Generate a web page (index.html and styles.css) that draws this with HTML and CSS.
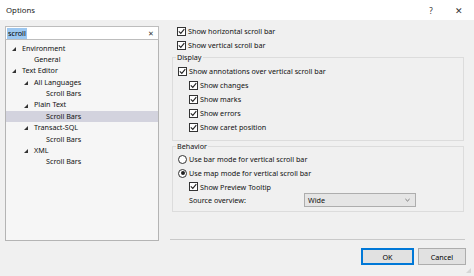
FILE: index.html
```html
<!DOCTYPE html>
<html>
<head>
<meta charset="utf-8">
<link rel="stylesheet" href="styles.css">
</head>
<body>
<div class="window">
  <div class="titlebar">
    <span class="title">Options</span>
    <span class="tb-btns"><span class="help">?</span><span class="close">✕</span></span>
  </div>
  <div class="main">
    <div class="left">
      <div class="search"><span class="sel">scroll</span><span class="clear">✕</span></div>
      <div class="tree">
        <div class="node l0"><span class="tog"><i class="tri"></i></span>Environment</div>
        <div class="node l1"><span class="tog"></span>General</div>
        <div class="node l0"><span class="tog"><i class="tri"></i></span>Text Editor</div>
        <div class="node l1"><span class="tog"><i class="tri"></i></span>All Languages</div>
        <div class="node l2"><span class="tog"></span>Scroll Bars</div>
        <div class="node l1"><span class="tog"><i class="tri"></i></span>Plain Text</div>
        <div class="node l2 selected"><span class="tog"></span>Scroll Bars</div>
        <div class="node l1"><span class="tog"><i class="tri"></i></span>Transact-SQL</div>
        <div class="node l2"><span class="tog"></span>Scroll Bars</div>
        <div class="node l1"><span class="tog"><i class="tri"></i></span>XML</div>
        <div class="node l2"><span class="tog"></span>Scroll Bars</div>
      </div>
    </div>
    <div class="right">
      <div class="row"><span class="cb"><svg viewBox="0 0 7 7"><path d="M0.8 3.4 L2.8 5.4 L6.3 1.2"/></svg></span>Show horizontal scroll bar</div>
      <div class="row"><span class="cb"><svg viewBox="0 0 7 7"><path d="M0.8 3.4 L2.8 5.4 L6.3 1.2"/></svg></span>Show vertical scroll bar</div>
      <fieldset class="group display">
        <legend>Display</legend>
        <div class="row"><span class="cb"><svg viewBox="0 0 7 7"><path d="M0.8 3.4 L2.8 5.4 L6.3 1.2"/></svg></span>Show annotations over vertical scroll bar</div>
        <div class="row sub"><span class="cb"><svg viewBox="0 0 7 7"><path d="M0.8 3.4 L2.8 5.4 L6.3 1.2"/></svg></span>Show changes</div>
        <div class="row sub"><span class="cb"><svg viewBox="0 0 7 7"><path d="M0.8 3.4 L2.8 5.4 L6.3 1.2"/></svg></span>Show marks</div>
        <div class="row sub"><span class="cb"><svg viewBox="0 0 7 7"><path d="M0.8 3.4 L2.8 5.4 L6.3 1.2"/></svg></span>Show errors</div>
        <div class="row sub"><span class="cb"><svg viewBox="0 0 7 7"><path d="M0.8 3.4 L2.8 5.4 L6.3 1.2"/></svg></span>Show caret position</div>
      </fieldset>
      <fieldset class="group behavior">
        <legend>Behavior</legend>
        <div class="row"><span class="rb"></span>Use bar mode for vertical scroll bar</div>
        <div class="row"><span class="rb on"><i></i></span>Use map mode for vertical scroll bar</div>
        <div class="row sub short"><span class="cb"><svg viewBox="0 0 7 7"><path d="M0.8 3.4 L2.8 5.4 L6.3 1.2"/></svg></span>Show Preview Tooltip</div>
        <div class="row sub"><span class="lbl">Source overview:</span><span class="combo"><span>Wide</span><svg class="chev" viewBox="0 0 6 4"><path d="M0.5 0.8 L3 3.2 L5.5 0.8"/></svg></span></div>
      </fieldset>
      <div class="spacer"></div>
      <div class="sep"></div>
    </div>
  </div>
  <div class="footer">
    <button class="btn ok">OK</button>
    <button class="btn">Cancel</button>
    <span class="grip"></span>
  </div>
</div>
</body>
</html>
```
FILE: styles.css
```css
html, body {
  margin: 0;
  padding: 0;
}
body {
  width: 474px;
  height: 276px;
  overflow: hidden;
  background: #f0f0f0;
  font-family: "Noto Sans", "Open Sans", sans-serif;
  font-size: 7.2px;
  color: #111;
}
.window {
  width: 474px;
  height: 276px;
  display: flex;
  flex-direction: column;
}
.titlebar {
  height: 20px;
  background: #fff;
  display: flex;
  align-items: center;
  justify-content: space-between;
  padding: 0 0 0 6px;
  flex: none;
}
.title {
  font-size: 7.8px;
  color: #222;
}
.tb-btns {
  display: flex;
  align-items: center;
  color: #333;
}
.help {
  font-size: 8px;
  width: 28px;
  text-align: center;
}
.close {
  font-size: 9px;
  width: 28px;
  text-align: center;
  margin-right: 1px;
}
.main {
  display: flex;
  height: 221px;
  flex: none;
}
.left {
  width: 154px;
  margin-left: 5px;
  padding-top: 6px;
  display: flex;
  flex-direction: column;
}
.search {
  height: 14px;
  box-sizing: border-box;
  background: #fff;
  border: 1px solid #bdbdbd;
  display: flex;
  align-items: center;
  justify-content: space-between;
  padding: 0 4px 0 1px;
}
.sel {
  background: #9cc7f0;
  color: #000;
  padding: 0 1px;
  line-height: 11px;
}
.clear {
  font-size: 6.5px;
  color: #333;
}
.tree {
  flex: 1;
  box-sizing: border-box;
  background: #f6f6f6;
  border: 1px solid #b4b4b4;
  border-top: none;
  padding-top: 2.5px;
}
.node {
  height: 11.4px;
  line-height: 11.4px;
  display: flex;
  align-items: center;
  white-space: nowrap;
}
.node.l0 { padding-left: 6px; }
.node.l1 { padding-left: 18px; }
.node.l2 { padding-left: 30px; }
.node.selected {
  background: #d3d3de;
}
.tog {
  width: 10px;
  height: 11px;
  display: flex;
  align-items: center;
  flex: none;
}
.tri {
  display: block;
  width: 0;
  height: 0;
  border-left: 4px solid transparent;
  border-bottom: 4px solid #333;
  margin-top: 1px;
}
.right {
  flex: 1;
  margin-left: 11px;
  margin-right: 10px;
  padding-top: 4px;
  display: flex;
  flex-direction: column;
}
.row {
  height: 14px;
  display: flex;
  align-items: center;
  padding-left: 7px;
  white-space: nowrap;
}
.row.sub {
  padding-left: 18px;
}
.row.short {
  height: 13px;
}
.cb {
  width: 9px;
  height: 9px;
  box-sizing: border-box;
  border: 1px solid #333;
  background: #fff;
  margin-right: 2px;
  display: flex;
  align-items: center;
  justify-content: center;
  flex: none;
}
.cb svg {
  width: 7px;
  height: 7px;
  fill: none;
  stroke: #222;
  stroke-width: 1.1;
}
.rb {
  width: 9px;
  height: 9px;
  box-sizing: border-box;
  border: 1px solid #333;
  border-radius: 50%;
  background: #fff;
  margin-right: 2px;
  display: flex;
  align-items: center;
  justify-content: center;
  flex: none;
}
.rb i {
  display: block;
  width: 4px;
  height: 4px;
  border-radius: 50%;
  background: #222;
}
.group {
  margin: 0 0 0 2px;
  border: 1px solid #dcdcdc;
  padding: 2px 0 6px 3px;
  min-width: 0;
}
.group legend {
  padding: 0 1px;
  line-height: 10px;
  height: 10px;
  margin-left: 0;
}
.group .row {
  padding-left: 2px;
}
.group .row.sub {
  padding-left: 13px;
}
.behavior {
  padding-top: 1px;
  padding-bottom: 4px;
}
.lbl {
  width: 115px;
  flex: none;
}
.combo {
  width: 112px;
  height: 14px;
  box-sizing: border-box;
  background: #e5e5e5;
  border: 1px solid #adadad;
  display: flex;
  align-items: center;
  justify-content: space-between;
  padding: 0 5px 0 3px;
}
.chev {
  width: 5px;
  height: 4px;
  fill: none;
  stroke: #555;
  stroke-width: 0.9;
}
.spacer {
  flex: 1;
}
.sep {
  height: 1px;
  background: #c9c9c9;
  margin-bottom: 1px;
  margin-right: -1px;
}
.footer {
  flex: 1;
  display: flex;
  align-items: flex-start;
  justify-content: flex-end;
  padding: 7px 8px 0 0;
  gap: 4px;
  position: relative;
}
.btn {
  font-family: inherit;
  font-size: 7.2px;
  height: 17px;
  margin: 0;
  padding: 0;
  background: #e1e1e1;
  border: 1px solid #adadad;
  color: #000;
  width: 48px;
}
.btn.ok {
  width: 53px;
  border: 1px solid #0078d7;
  box-shadow: inset 0 0 0 1px #0078d7;
}
.grip {
  position: absolute;
  right: 3px;
  bottom: 3px;
  width: 5px;
  height: 5px;
  background: radial-gradient(circle, #b8b8b8 0.6px, transparent 0.8px) 0 0 / 2px 2px;
  clip-path: polygon(100% 0, 100% 100%, 0 100%);
}
```
